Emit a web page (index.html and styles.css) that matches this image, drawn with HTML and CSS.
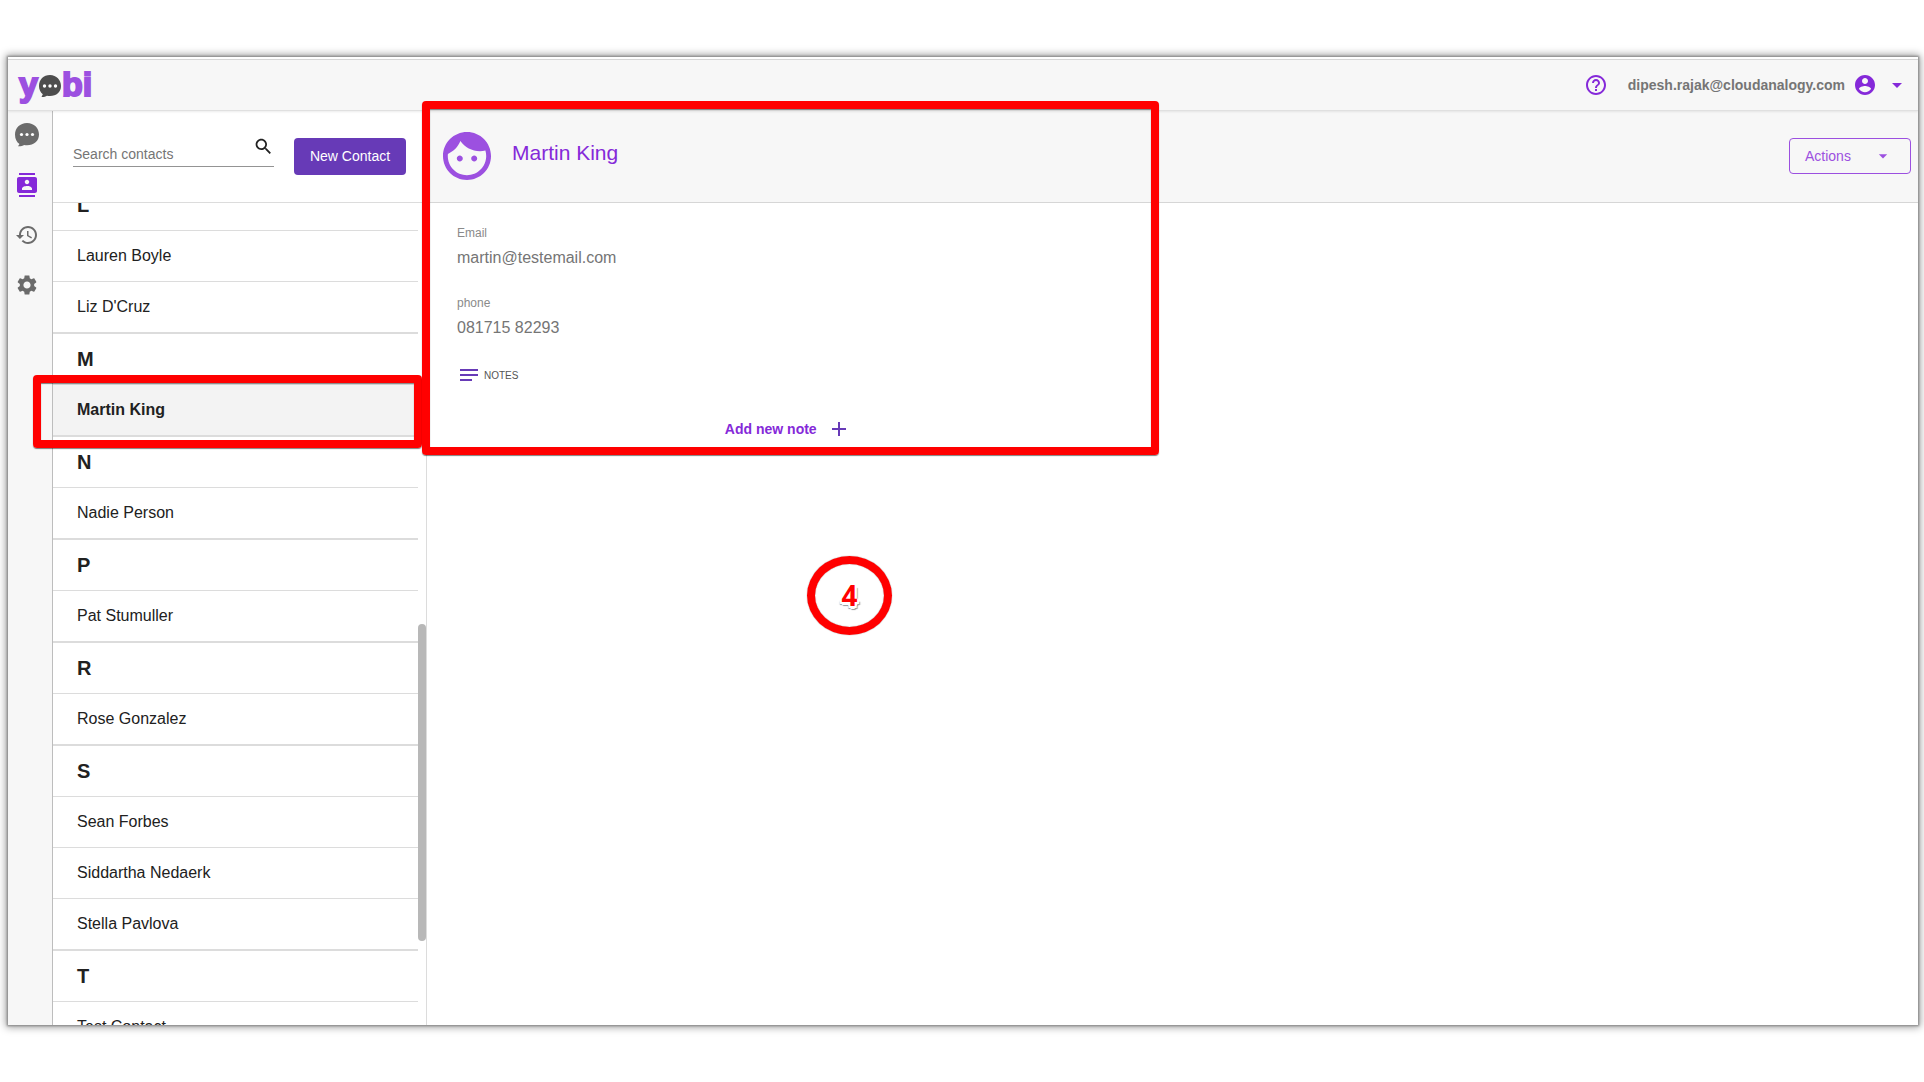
FILE: index.html
```html
<!DOCTYPE html>
<html lang="en">
<head>
    <meta charset="UTF-8">
    <meta name="viewport" content="width=device-width, initial-scale=1.0">
    <title>Yobi - Contacts</title>
    <link rel="stylesheet" href="styles.css">
</head>
<body>
    <div class="app">
        <header class="topbar">
            <a href="#" class="logo" aria-label="yobi">
                <span>y</span>
                <svg class="logo-bubble" viewBox="0 0 24 24"><path fill="#4d4d4d" d="M12 1C5.500 1 1 5.500 1 12c0 3.600 1.500 6.500 3.800 8.300L3.500 23c2 .2 4-.3 5.500-1.300 1 .2 2 .3 3 .3 6.500 0 11-4 11-10S18.500 1 12 1z"/><g fill="#fff"><circle cx="6.500" cy="12" r="1.700"/><circle cx="12" cy="12" r="1.700"/><circle cx="17.500" cy="12" r="1.700"/></g></svg>
                <span>bi</span>
            </a>
            <div class="account">
                <button type="button" class="icon-btn" aria-label="Help">
                    <svg viewBox="0 0 24 24"><path d="M11 18h2v-2h-2v2zm1-16C6.480 2 2 6.480 2 12s4.480 10 10 10 10-4.480 10-10S17.520 2 12 2zm0 18c-4.410 0-8-3.590-8-8s3.590-8 8-8 8 3.590 8 8-3.590 8-8 8zm0-14c-2.210 0-4 1.790-4 4h2c0-1.100.9-2 2-2s2 .9 2 2c0 2-3 1.750-3 5h2c0-2.250 3-2.500 3-5 0-2.210-1.790-4-4-4z"/></svg>
                </button>
                <button type="button" class="user-menu">
                    <span>dipesh.rajak@cloudanalogy.com</span>
                    <svg viewBox="0 0 24 24"><path d="M12 2C6.480 2 2 6.480 2 12s4.480 10 10 10 10-4.480 10-10S17.520 2 12 2zm0 3c1.660 0 3 1.340 3 3s-1.340 3-3 3-3-1.340-3-3 1.340-3 3-3zm0 14.200c-2.500 0-4.710-1.280-6-3.220.03-1.990 4-3.080 6-3.080 1.990 0 5.970 1.090 6 3.080-1.290 1.940-3.500 3.220-6 3.220z"/></svg>
                    <svg class="caret" viewBox="0 0 24 24"><path d="M7 10l5 5 5-5z"/></svg>
                </button>
            </div>
        </header>

        <div class="main">
            <nav class="rail">
                <a href="#" aria-label="Messages"><svg viewBox="0 0 24 24"><path d="M12 0C5 0 0 5 0 11.500c0 4.500 1.800 7.700 4.500 9.500L3 23.300c2.500.2 4.500-.3 6.300-1.300.9.200 1.700.2 2.700.2 7 0 12-4.200 12-10.700S19 0 12 0z"/><g fill="#fff"><circle cx="6.500" cy="11.500" r="1.600"/><circle cx="12" cy="11.500" r="1.600"/><circle cx="17.500" cy="11.500" r="1.600"/></g></svg></a>
                <a href="#" class="active" aria-label="Contacts"><svg viewBox="0 0 24 24"><path d="M20 0H4v2h16V0zM4 24h16v-2H4v2zM20 4H4c-1.100 0-2 .9-2 2v12c0 1.100.9 2 2 2h16c1.100 0 2-.9 2-2V6c0-1.100-.9-2-2-2zm-8 2.750c1.240 0 2.250 1.010 2.250 2.250s-1.010 2.250-2.250 2.250S9.750 10.240 9.750 9 10.760 6.750 12 6.750zM17 17H7v-1.500c0-1.670 3.330-2.500 5-2.500s5 .83 5 2.500V17z"/></svg></a>
                <a href="#" aria-label="History"><svg viewBox="0 0 24 24"><path d="M13 3c-4.970 0-9 4.030-9 9H1l3.890 3.890.07.14L9 12H6c0-3.870 3.130-7 7-7s7 3.130 7 7-3.130 7-7 7c-1.930 0-3.680-.79-4.940-2.060l-1.420 1.420C8.270 19.990 10.510 21 13 21c4.970 0 9-4.030 9-9s-4.030-9-9-9zm-1 5v5l4.280 2.540.72-1.210-3.500-2.080V8H12z"/></svg></a>
                <a href="#" aria-label="Settings"><svg viewBox="0 0 24 24"><path d="M19.140 12.940c.04-.3.06-.61.06-.94 0-.32-.02-.64-.07-.94l2.030-1.580c.18-.14.23-.41.12-.61l-1.920-3.320c-.12-.22-.37-.29-.59-.22l-2.390.96c-.5-.38-1.030-.7-1.620-.94l-.36-2.540c-.04-.24-.24-.41-.48-.41h-3.840c-.24 0-.43.17-.47.41l-.36 2.540c-.59.24-1.130.57-1.620.94l-2.390-.96c-.22-.08-.47 0-.59.22L2.740 8.870c-.12.21-.08.47.12.61l2.030 1.580c-.05.3-.09.63-.09.94s.02.64.07.94l-2.030 1.580c-.18.14-.23.41-.12.61l1.920 3.320c.12.22.37.29.59.22l2.390-.96c.5.38 1.030.7 1.620.94l.36 2.540c.05.24.24.41.48.41h3.840c.24 0 .44-.17.47-.41l.36-2.540c.59-.24 1.130-.56 1.620-.94l2.390.96c.22.08.47 0 .59-.22l1.920-3.320c.12-.22.07-.47-.12-.61l-2.010-1.580zM12 15.600c-1.980 0-3.600-1.620-3.600-3.600s1.620-3.600 3.600-3.600 3.600 1.620 3.600 3.600-1.620 3.600-3.600 3.600z"/></svg></a>
            </nav>

            <aside class="contacts">
                <div class="contacts-head">
                    <div class="search">
                        <input type="text" id="search" placeholder="Search contacts" aria-label="Search contacts">
                        <svg viewBox="0 0 24 24"><path d="M15.500 14h-.79l-.28-.27C15.410 12.590 16 11.110 16 9.500 16 5.910 13.090 3 9.500 3S3 5.910 3 9.500 5.910 16 9.500 16c1.610 0 3.090-.59 4.230-1.570l.27.28v.79l5 4.990L20.490 19l-4.990-5zm-6 0C7.010 14 5 11.990 5 9.500S7.010 5 9.500 5 14 7.010 14 9.500 11.990 14 9.500 14z"/></svg>
                    </div>
                    <button type="button" class="new-contact">New Contact</button>
                </div>
                <div class="contacts-body">
                    <div class="contact-list">
                        <section>
                            <h3>L</h3>
                            <a href="#">Lauren Boyle</a>
                            <a href="#">Liz D'Cruz</a>
                        </section>
                        <section>
                            <h3>M</h3>
                            <a href="#" class="selected">Martin King</a>
                        </section>
                        <section>
                            <h3>N</h3>
                            <a href="#">Nadie Person</a>
                        </section>
                        <section>
                            <h3>P</h3>
                            <a href="#">Pat Stumuller</a>
                        </section>
                        <section>
                            <h3>R</h3>
                            <a href="#">Rose Gonzalez</a>
                        </section>
                        <section>
                            <h3>S</h3>
                            <a href="#">Sean Forbes</a>
                            <a href="#">Siddartha Nedaerk</a>
                            <a href="#">Stella Pavlova</a>
                        </section>
                        <section>
                            <h3>T</h3>
                            <a href="#">Test Contact</a>
                        </section>
                    </div>
                    <div class="scroll-track"><div class="scroll-thumb"></div></div>
                </div>
            </aside>

            <main class="detail">
                <div class="detail-head">
                    <svg class="avatar" viewBox="2 2 20 20"><path d="M9 11.750c-.69 0-1.250.56-1.250 1.250s.56 1.250 1.250 1.250 1.250-.56 1.250-1.250-.56-1.250-1.250-1.250zm6 0c-.69 0-1.250.56-1.250 1.250s.56 1.250 1.250 1.250 1.250-.56 1.250-1.250-.56-1.250-1.250-1.250zM12 2C6.480 2 2 6.480 2 12s4.480 10 10 10 10-4.480 10-10S17.520 2 12 2zm0 18c-4.410 0-8-3.590-8-8 0-.29.02-.58.05-.86 2.360-1.050 4.230-2.980 5.210-5.370C11.070 8.330 14.050 10 17.420 10c.78 0 1.530-.09 2.250-.26.210.710.330 1.470.330 2.260 0 4.410-3.590 8-8 8z"/></svg>
                    <h1>Martin King</h1>
                    <button type="button" class="actions">
                        Actions
                        <svg viewBox="0 0 24 24"><path d="M7 10l5 5 5-5z"/></svg>
                    </button>
                </div>
                <div class="detail-body">
                    <dl>
                        <dt>Email</dt>
                        <dd>martin@testemail.com</dd>
                        <dt>phone</dt>
                        <dd>081715 82293</dd>
                    </dl>
                    <div class="notes">
                        <svg viewBox="3 6 18 12"><path d="M3 18h12v-2H3v2zM3 6v2h18V6H3zm0 7h18v-2H3v2z"/></svg>
                        <span>NOTES</span>
                    </div>
                    <button type="button" class="add-note">
                        Add new note
                        <svg viewBox="0 0 24 24"><path d="M19 13h-6v6h-2v-6H5v-2h6V5h2v6h6v2z"/></svg>
                    </button>
                </div>
            </main>
        </div>
    </div>

    <!-- tutorial markers -->
    <div class="marker marker-contact"></div>
    <div class="marker marker-detail"></div>
    <div class="step">4</div>
</body>
</html>
```
FILE: styles.css
```css
* {
    box-sizing: border-box;
}
body {
    font-family: "Liberation Sans", Arial, sans-serif;
    font-size: 14px;
    color: #212121;
    background: #fff;
    margin: 0;
    padding: 57px 6px 57px 8px;
    height: 100vh;
    position: relative;
}
button {
    font-family: inherit;
    font-size: 14px;
    color: inherit;
    background: none;
    border: none;
    padding: 0;
    cursor: pointer;
}
a {
    color: inherit;
    text-decoration: none;
}
svg {
    display: block;
    flex: none;
    fill: currentColor;
}
.app {
    display: flex;
    flex-direction: column;
    height: 100%;
    padding-top: 2px;
    overflow: hidden;
    background: #fff;
    box-shadow: 0 0 2px 1px #888, 0 0 8px 2px rgba(0, 0, 0, 0.4);
}

/* top bar */
.topbar {
    display: flex;
    justify-content: space-between;
    align-items: center;
    height: 52px;
    flex: none;
    padding: 0 9px 0 11px;
    background: #f7f7f7;
    border-top: 1px solid #d6d6d6;
    border-bottom: 1px solid #e0e0e0;
    box-shadow: 0 1px 2px rgba(0, 0, 0, 0.08);
    position: relative;
}
.logo {
    display: flex;
    align-items: center;
    height: 50px;
    padding-bottom: 2px;
    font-family: "Liberation Sans Narrow", "Liberation Sans", sans-serif;
    font-size: 34px;
    line-height: 46px;
    font-weight: bold;
    color: #9c50e0;
    -webkit-text-stroke: 2px #9c50e0;
}
.logo-bubble {
    width: 24px;
    height: 24px;
    margin: 3px 0 0;
    z-index: 1;
}
.account {
    display: flex;
    align-items: center;
    gap: 20px;
    color: #8529d9;
}
.account svg {
    width: 24px;
    height: 24px;
}
.user-menu {
    display: flex;
    align-items: center;
    gap: 8px;
}
.user-menu span {
    font-weight: bold;
    color: #757575;
}

.main {
    display: flex;
    flex: 1;
    min-height: 0;
}

/* left icon rail */
.rail {
    width: 45px;
    flex: none;
    background: #f7f7f7;
    border-right: 1px solid #bdbdbd;
    color: #6b6b6b;
}
.rail a {
    display: flex;
    height: 50px;
    align-items: center;
    padding: 0 0 2px 7px;
}
.rail svg {
    width: 24px;
    height: 24px;
}
.rail .active {
    color: #8529d9;
}

/* contact list */
.contacts {
    display: flex;
    flex-direction: column;
    width: 374px;
    flex: none;
    border-right: 1px solid #dcdcdc;
}
.contacts-head {
    display: flex;
    align-items: center;
    gap: 20px;
    height: 92px;
    flex: none;
    padding: 0 20px 1px;
    border-bottom: 1px solid #dcdcdc;
}
.search {
    display: flex;
    flex: 1;
    min-width: 0;
    height: 34px;
    margin-bottom: 12px;
    border-bottom: 1px solid #949494;
}
.search input {
    flex: 1;
    min-width: 0;
    padding: 8px 0 0;
    border: none;
    outline: none;
    background: none;
    font-family: inherit;
    font-size: 14px;
}
.search input::placeholder {
    color: #757575;
}
.search svg {
    width: 21px;
    height: 21px;
    margin-top: 3px;
}
.new-contact {
    width: 112px;
    height: 37px;
    padding-bottom: 1px;
    border-radius: 4px;
    background: #673ab7;
    color: #fff;
}
.contacts-body {
    display: flex;
    flex: 1;
    min-height: 0;
    overflow: hidden;
}
.contact-list {
    flex: 1;
    /* scrolled part way into the L group */
    margin-top: -23px;
}
.contact-list section {
    border-bottom: 1px solid #dcdcdc;
}
.contact-list h3,
.contact-list a {
    display: block;
    height: 51px;
    margin: 0;
    padding-left: 24px;
    line-height: 50px;
    border-bottom: 1px solid #dcdcdc;
    font-size: 16px;
}
.contact-list h3 {
    font-size: 20px;
}
.contact-list .selected {
    background: #f3f3f3;
    font-weight: bold;
}
.scroll-track {
    display: flex;
    flex-direction: column;
    width: 8px;
}
.scroll-track::before {
    content: "";
    height: 51.2%;
}
.scroll-thumb {
    height: 38.6%;
    border-radius: 4px;
    background: #b8b8b8;
}

/* contact detail */
.detail {
    flex: 1;
    min-width: 0;
}
.detail-head {
    display: flex;
    align-items: center;
    height: 92px;
    padding: 0 7px 2px 16px;
    background: #f7f7f7;
    border-bottom: 1px solid #d6d6d6;
}
.avatar {
    width: 48px;
    height: 48px;
    color: #9c50e0;
}
.detail-head h1 {
    flex: 1;
    margin: 0 21px 6px;
    font-size: 21px;
    font-weight: normal;
    color: #8529d9;
}
.actions {
    display: flex;
    align-items: center;
    justify-content: space-between;
    width: 122px;
    height: 36px;
    padding: 0 17px 0 15px;
    border: 1px solid #9c50e0;
    border-radius: 4px;
    color: #9c50e0;
}
.actions svg {
    width: 20px;
    height: 20px;
}
.detail-body {
    width: 50%;
    padding: 20px 54px 0 30px;
}
dl {
    margin: 0;
}
dt {
    font-size: 12px;
    line-height: 20px;
    color: #8a8a8a;
}
dd {
    margin: 0 0 20px;
    font-size: 16px;
    line-height: 30px;
    color: #757575;
}
.notes {
    display: flex;
    align-items: center;
    gap: 6px;
    height: 24px;
    padding-left: 3px;
    font-size: 10px;
    color: #555;
}
.notes svg {
    width: 18px;
    height: 12px;
    color: #673ab7;
}
.add-note {
    display: flex;
    align-items: center;
    gap: 10px;
    margin: 30px auto 0;
    font-weight: bold;
    color: #8529d9;
}
.add-note svg {
    width: 24px;
    height: 24px;
    color: #673ab7;
}

/* markers drawn over the app */
.marker {
    position: absolute;
    border: 8px solid #f00;
    border-radius: 4px;
    box-shadow: 0 1px 1px rgba(0, 0, 0, 0.5), inset 0 1px 1px rgba(0, 0, 0, 0.5);
}
.marker-contact {
    left: 33px;
    top: 375px;
    width: 389px;
    height: 73px;
}
.marker-detail {
    left: 422px;
    top: 101px;
    width: 737px;
    height: 354px;
}
.step {
    position: absolute;
    left: 807px;
    top: 556px;
    width: 85px;
    height: 79px;
    border: 8px solid #f00;
    border-radius: 50%;
    text-align: center;
    font-family: "Noto Sans", sans-serif;
    font-size: 28px;
    font-weight: bold;
    line-height: 63px;
    color: #f00;
    text-shadow: 2px 0 #fff, -2px 0 #fff, 2px 2px #fff, -2px 2px #fff, 0 3px #fff, 3px 3px 1px #999, -2px 3px 1px #999, 1px 4px 1px #999;
    box-shadow: 0 0 1px rgba(0, 0, 0, 0.6), inset 0 0 1px rgba(0, 0, 0, 0.6);
}
```
